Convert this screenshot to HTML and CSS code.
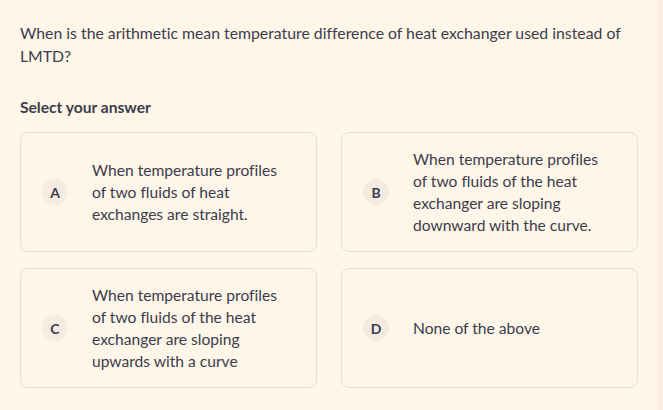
FILE: index.html
```html
<!DOCTYPE html>
<html lang="en">
<head>
<meta charset="utf-8">
<link rel="stylesheet" href="styles.css">
</head>
<body>
<div class="page">
  <main class="quiz">
    <p class="question">When is the arithmetic mean temperature difference of heat exchanger used instead of LMTD?</p>
    <h2 class="prompt">Select your answer</h2>
    <div class="options">
      <div class="option"><span class="badge">A</span><span class="text">When temperature profiles<br>of two fluids of heat<br>exchanges are straight.</span></div>
      <div class="option"><span class="badge">B</span><span class="text">When temperature profiles<br>of two fluids of the heat<br>exchanger are sloping<br>downward with the curve.</span></div>
      <div class="option"><span class="badge">C</span><span class="text">When temperature profiles<br>of two fluids of the heat<br>exchanger are sloping<br>upwards with a curve</span></div>
      <div class="option"><span class="badge">D</span><span class="text">None of the above</span></div>
    </div>
  </main>
  <div class="edge"></div>
</div>
</body>
</html>
```

FILE: styles.css
```css
html, body {
  margin: 0;
  padding: 0;
  background: #fff6ea;
}
.page {
  display: flex;
  height: 410px;
  overflow: hidden;
}
.quiz {
  flex: 1;
  padding: 21px 19px 0 20px;
  font-family: Lato, "Open Sans", sans-serif;
  font-variant-ligatures: none;
  color: #3b3d4a;
}
.edge {
  width: 6px;
  background: #fdefe4;
}
.question {
  margin: 0;
  font-size: 15.8px;
  line-height: 23px;
}
.prompt {
  margin: 30px 0 0;
  font-size: 15.6px;
  font-weight: 700;
  line-height: 20px;
  color: #3b3d4a;
}
.options {
  margin-top: 15px;
  display: grid;
  grid-template-columns: 1fr 1fr;
  column-gap: 24px;
  row-gap: 16px;
}
.option {
  display: flex;
  align-items: center;
  min-height: 120px;
  box-sizing: border-box;
  padding: 15px 20px 15px 21px;
  border: 1px solid #eadcd6;
  border-radius: 8px;
}
.badge {
  flex: none;
  width: 26px;
  height: 26px;
  border-radius: 50%;
  background: #f5ebe3;
  display: flex;
  align-items: center;
  justify-content: center;
  font-size: 14px;
  font-weight: 700;
  color: #3b3d4a;
  margin-right: 24px;
}
.text {
  font-size: 15.6px;
  line-height: 22px;
}
```
